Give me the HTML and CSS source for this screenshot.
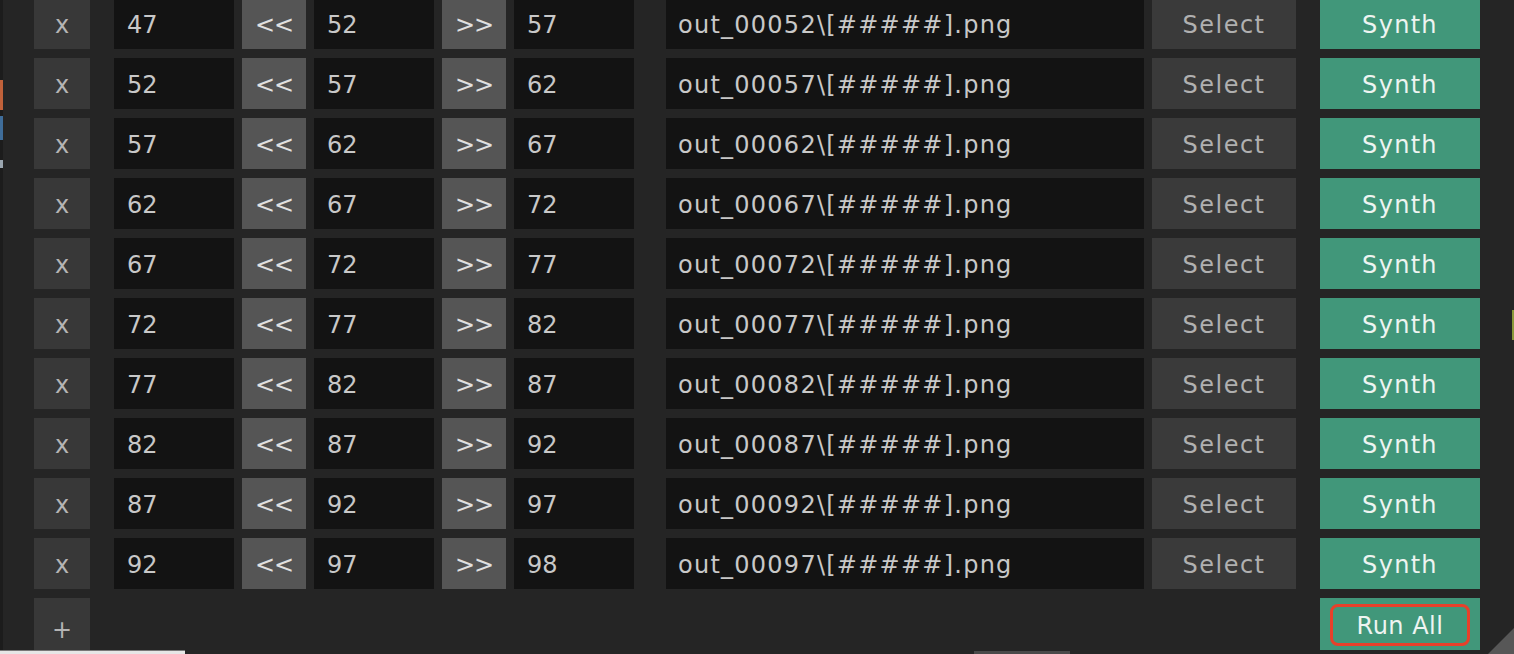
FILE: index.html
```html
<!DOCTYPE html>
<html lang="en">
<head>
  <meta charset="UTF-8" />
  <title>Frame Synth Queue</title>
  <link rel="stylesheet" href="styles.css">
</head>
<body>
  <div class="edge-left">
    <span class="mark orange"></span>
    <span class="mark blue"></span>
    <span class="mark pale"></span>
  </div>

  <div class="panel" id="panel"></div>

  <div class="edge-right"><span class="mark lime"></span></div>
  <div class="bottom-strip white"></div>
  <div class="bottom-strip gray"></div>
  <div class="resize-grip"></div>

  <script>
  // build the job rows: start / mid / end frames and output folder
  const jobs = [
    [47, 52, 57], [52, 57, 62], [57, 62, 67], [62, 67, 72], [67, 72, 77],
    [72, 77, 82], [77, 82, 87], [82, 87, 92], [87, 92, 97], [92, 97, 98]
  ];

  const panel = document.getElementById('panel');

  jobs.forEach(function (job) {
    const out = 'out_' + String(job[1]).padStart(5, '0') + '\\[#####].png';
    const row = document.createElement('div');
    row.className = 'row';
    row.innerHTML =
      '<button class="btn btn-del">x</button>' +
      '<div class="field num">' + job[0] + '</div>' +
      '<button class="btn btn-step">&lt;&lt;</button>' +
      '<div class="field num">' + job[1] + '</div>' +
      '<button class="btn btn-step">&gt;&gt;</button>' +
      '<div class="field num">' + job[2] + '</div>' +
      '<div class="field path">' + out + '</div>' +
      '<button class="btn btn-select">Select</button>' +
      '<button class="btn btn-synth">Synth</button>';
    panel.appendChild(row);
  });

  const last = document.createElement('div');
  last.className = 'row row-last';
  last.innerHTML =
    '<button class="btn btn-del">+</button>' +
    '<div class="spacer"></div>' +
    '<button class="btn btn-synth btn-run"><span class="highlight">Run All</span></button>';
  panel.appendChild(last);
  </script>
</body>
</html>
```

FILE: styles.css
```css
/* Dark job queue panel */
body {
  margin: 0;
  height: 654px;
  overflow: hidden;
  background: #252525;
  font-family: 'DejaVu Sans', Verdana, sans-serif;
  color: #c8c8c8;
  position: relative;
}

.panel {
  display: flex;
  flex-direction: column;
  gap: 9px;
  margin-top: -2px;
  padding-left: 34px;
}

.row {
  display: flex;
  gap: 8px;
  height: 51px;
}

.btn {
  border: none;
  margin: 0;
  padding: 3px 0 0;
  font-family: inherit;
  font-size: 24px;
  color: #c4c4c4;
  display: flex;
  align-items: center;
  justify-content: center;
  box-sizing: border-box;
}

.btn-del {
  width: 56px;
  background: #383838;
  color: #b4b4b4;
  margin-right: 16px;
}

.btn-step {
  width: 64px;
  background: #555555;
  color: #e0e0e0;
  letter-spacing: -1px;
}

.field {
  background: #131313;
  font-size: 24px;
  display: flex;
  align-items: center;
  box-sizing: border-box;
  padding-top: 3px;
}

.num {
  width: 120px;
  padding-left: 13px;
}

.path {
  width: 478px;
  padding-left: 12px;
  margin-left: 24px;
  letter-spacing: 1.25px;
}

.btn-select {
  width: 144px;
  background: #3a3a3a;
  color: #b0b0b0;
  letter-spacing: 1.5px;
  margin-right: 16px;
}

.btn-synth {
  width: 160px;
  background: #41977a;
  color: #eef4f1;
  letter-spacing: 1.3px;
}

.row-last {
  height: 60px;
}

.spacer {
  flex: none;
  width: 1182px;
  margin-right: 16px;
}

.btn-run {
  position: relative;
  height: 52px;
  letter-spacing: 0.5px;
}

.highlight {
  position: absolute;
  left: 10px;
  right: 10px;
  top: 6px;
  bottom: 4px;
  padding-top: 2px;
  border: 3px solid #e8402a;
  border-radius: 8px;
  display: flex;
  align-items: center;
  justify-content: center;
}

/* window edges */
.edge-left {
  position: absolute;
  left: 0;
  top: 0;
  width: 3px;
  height: 100%;
  background: #1c1c1c;
}

.mark {
  position: absolute;
  left: 0;
  width: 3px;
}

.orange { top: 80px; height: 30px; background: #c0613a; }
.blue { top: 116px; height: 24px; background: #3f6d9a; }
.pale { top: 160px; height: 8px; background: #9aa6b0; }

.edge-right {
  position: absolute;
  right: 0;
  top: 0;
  width: 2px;
  height: 100%;
}

.lime { top: 310px; height: 30px; width: 2px; background: #8a9a3a; }

.bottom-strip {
  position: absolute;
  bottom: 0;
  height: 3px;
}

.bottom-strip.white {
  left: 0;
  width: 185px;
  background: #e6e6e6;
  border-top: 1px solid #777;
}

.bottom-strip.gray {
  left: 974px;
  width: 96px;
  background: #4a4a4a;
}

.resize-grip {
  position: absolute;
  right: 0;
  bottom: 0;
  width: 0;
  height: 0;
  border-left: 26px solid transparent;
  border-bottom: 26px solid #575757;
}
```
